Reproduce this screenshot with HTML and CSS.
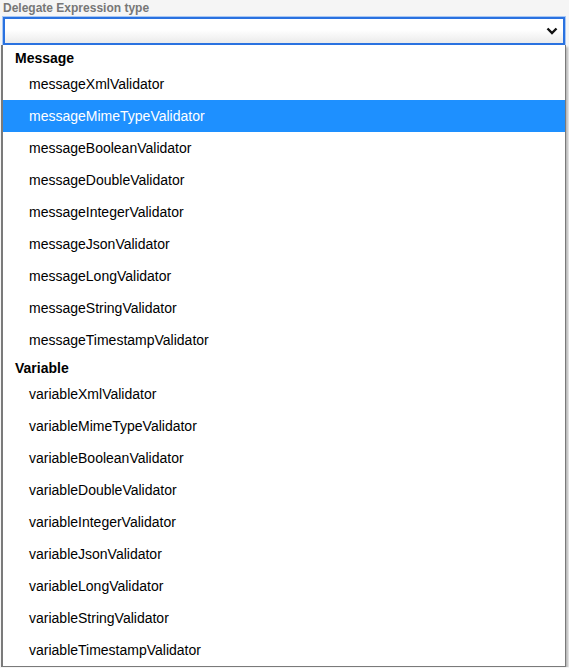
FILE: index.html
```html
<!DOCTYPE html>
<html>
<head>
<meta charset="utf-8">
<link rel="stylesheet" href="styles.css">
</head>
<body>
<div class="label">Delegate Expression type</div>
<div class="select">
  <svg class="chev" width="12" height="8" viewBox="0 0 12 8"><path d="M1.5 1.5 L6 6 L10.5 1.5" fill="none" stroke="#111" stroke-width="2.4"/></svg>
</div>
<div class="dropdown">
  <div class="group">Message</div>
  <div class="item">messageXmlValidator</div>
  <div class="item active">messageMimeTypeValidator</div>
  <div class="item">messageBooleanValidator</div>
  <div class="item">messageDoubleValidator</div>
  <div class="item">messageIntegerValidator</div>
  <div class="item">messageJsonValidator</div>
  <div class="item">messageLongValidator</div>
  <div class="item">messageStringValidator</div>
  <div class="item">messageTimestampValidator</div>
  <div class="group">Variable</div>
  <div class="item">variableXmlValidator</div>
  <div class="item">variableMimeTypeValidator</div>
  <div class="item">variableBooleanValidator</div>
  <div class="item">variableDoubleValidator</div>
  <div class="item">variableIntegerValidator</div>
  <div class="item">variableJsonValidator</div>
  <div class="item">variableLongValidator</div>
  <div class="item">variableStringValidator</div>
  <div class="item">variableTimestampValidator</div>
</div>
</body>
</html>
```
FILE: styles.css
```css
html, body {
  margin: 0;
  padding: 0;
  background: #f5f5f5;
  font-family: "Liberation Sans", Arial, sans-serif;
  overflow: hidden;
}
.label {
  height: 17px;
  line-height: 17px;
  padding-left: 3px;
  font-size: 12px;
  font-weight: bold;
  color: #777;
}
.select {
  box-sizing: border-box;
  margin-left: 3px;
  width: 562px;
  height: 28px;
  border: 2px solid #2a72e0;
  box-shadow: 0 0 0 1px #a7c7f5;
  background: linear-gradient(#ffffff 45%, #ebebeb);
  display: flex;
  align-items: center;
  justify-content: flex-end;
  padding-right: 5px;
}
.chev {
  display: block;
}
.dropdown {
  box-sizing: border-box;
  margin-left: 1px;
  width: 565px;
  padding-top: 1px;
  background: #fff;
  border: 1px solid #7a7a7a;
  border-top: none;
  border-left-width: 2px;
  box-shadow: 2px 2px 2px rgba(0,0,0,0.25);
}
.group {
  height: 22px;
  line-height: 24px;
  padding-left: 12px;
  font-size: 14px;
  font-weight: bold;
  color: #000;
}
.item {
  height: 32px;
  line-height: 32px;
  padding-left: 26px;
  font-size: 14px;
  color: #000;
}
.item.active {
  background: #1e90ff;
  color: #fff;
}
```
